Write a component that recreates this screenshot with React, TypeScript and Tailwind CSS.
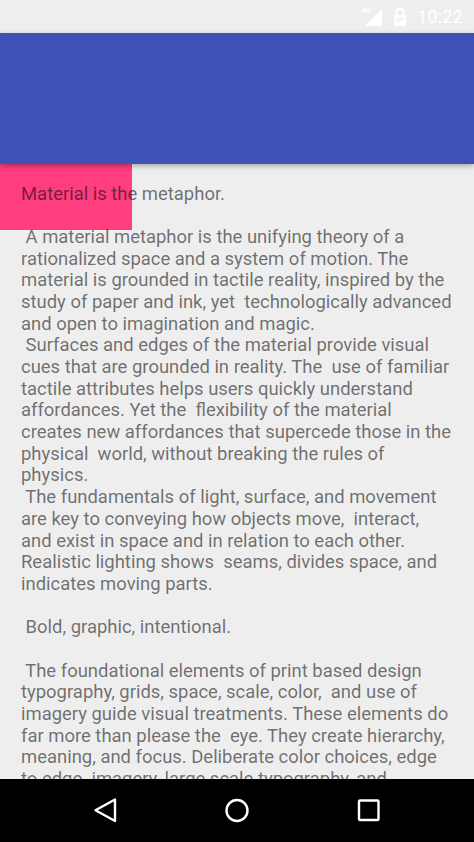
const lines = [
  "Material is the metaphor.",
  "",
  " A material metaphor is the unifying theory of a",
  "rationalized space and a system of motion. The",
  "material is grounded in tactile reality, inspired by the",
  "study of paper and ink, yet  technologically advanced",
  "and open to imagination and magic.",
  " Surfaces and edges of the material provide visual",
  "cues that are grounded in reality. The  use of familiar",
  "tactile attributes helps users quickly understand",
  "affordances. Yet the  flexibility of the material",
  "creates new affordances that supercede those in the",
  "physical  world, without breaking the rules of",
  "physics.",
  " The fundamentals of light, surface, and movement",
  "are key to conveying how objects move,  interact,",
  "and exist in space and in relation to each other.",
  "Realistic lighting shows  seams, divides space, and",
  "indicates moving parts.",
  "",
  " Bold, graphic, intentional.",
  "",
  " The foundational elements of print based design",
  "typography, grids, space, scale, color,  and use of",
  "imagery guide visual treatments. These elements do",
  "far more than please the  eye. They create hierarchy,",
  "meaning, and focus. Deliberate color choices, edge",
  "to edge  imagery, large scale typography, and",
];

export default function App() {
  return (
    <div className="relative flex h-[842px] w-[474px] flex-col overflow-hidden bg-[#eeeeee] font-['Roboto',sans-serif]">
      <div className="flex h-[33px] shrink-0 items-center justify-end bg-[#eeeeee] pr-[11px] text-white">
        <svg width="24" height="24" viewBox="0 0 24 24" className="mr-[6px]" fill="#ffffff">
          <path d="M21 4v17H4z" />
          <text x="1" y="8" fontSize="7" fontWeight="700" fill="#ffffff" fontFamily="Roboto">4G</text>
        </svg>
        <svg width="18" height="22" viewBox="0 0 18 22" className="mr-[8px]" fill="none">
          <path d="M3 9h12v11H3z" fill="#ffffff" />
          <path d="M5.5 9V6a3.5 3.5 0 0 1 7 0v3" stroke="#ffffff" strokeWidth="2" />
          <path d="M5 11h8v3l-8 3z" fill="#eeeeee" opacity="0.6" />
        </svg>
        <span className="text-[18px] leading-none tracking-[0.2px]">10:22</span>
      </div>
      <div className="relative z-10 h-[131px] shrink-0 bg-[#3f51b5] shadow-[0_2px_5px_rgba(0,0,0,0.3)]" />
      <div className="relative min-h-0 flex-1 overflow-hidden">
        <div className="absolute left-0 top-0 h-[66px] w-[132px] bg-[#ff3d7f]" />
        <div className="relative pl-[21px] pt-[19.5px] text-[18.45px] leading-[21.7px] text-black/55">
          {lines.map((l, i) => (
            <div key={i} className="h-[21.7px] whitespace-pre">{l}</div>
          ))}
        </div>
      </div>
      <div className="flex h-[63px] shrink-0 items-center bg-black">
        <svg width="474" height="63" viewBox="0 0 474 63" fill="none" stroke="#ffffff" strokeWidth="2.4" strokeLinejoin="round">
          <path d="M115 20.5v21.5L95.5 31.3z" />
          <circle cx="237" cy="31.5" r="10.5" />
          <rect x="359" y="21.5" width="19.5" height="19.5" rx="1" />
        </svg>
      </div>
    </div>
  );
}
